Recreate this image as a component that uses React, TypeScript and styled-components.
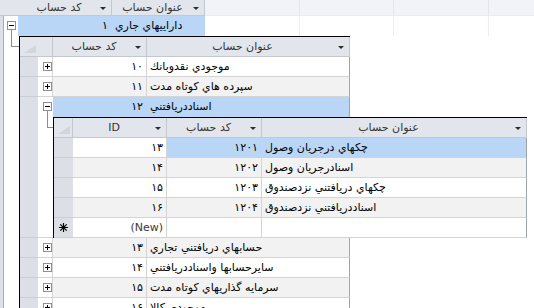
import React from 'react';
import styled, { createGlobalStyle } from 'styled-components';

const GlobalStyle = createGlobalStyle`
  html, body { margin: 0; padding: 0; background: #fff; }
  body {
    width: 534px; height: 308px; overflow: hidden;
    font-family: "DejaVu Sans", "Noto Sans", sans-serif;
    font-size: 11px; color: #000;
  }
`;

type Tone = 'plain' | 'alt' | 'sel';

const toneBg = (t?: Tone) => (t === 'sel' ? '#b9d6f6' : t === 'alt' ? '#f2f2f2' : '#ffffff');

const Page = styled.div`
  width: 534px;
  height: 308px;
  overflow: hidden;
`;

const Sheet = styled.div<{ $framed?: boolean }>`
  display: flex;
  flex-direction: column;
  align-items: flex-start;
  border-left: ${p => (p.$framed ? '1px solid #000' : 'none')};
`;

const HeadRow = styled.div<{ $h: number; $framed?: boolean }>`
  display: flex;
  flex: none;
  height: ${p => p.$h}px;
  border-top: ${p => (p.$framed ? '1px solid #000' : 'none')};
`;

const Corner = styled.div<{ $w: number; $divider?: boolean }>`
  box-sizing: border-box;
  width: ${p => p.$w}px;
  height: 100%;
  background: #e2e6ec;
  border-right: ${p => (p.$divider ? '1px solid #c3c7ce' : 'none')};
  border-bottom: 1px solid #c3c7ce;
  display: flex;
  align-items: flex-end;
  padding: 0 0 3px 4px;
`;

const HeadCell = styled.div<{ $w: number }>`
  box-sizing: border-box;
  width: ${p => p.$w}px;
  height: 100%;
  background: #e2e6ec;
  border-right: 1px solid #c3c7ce;
  border-bottom: 1px solid #c3c7ce;
  display: flex;
  align-items: center;
  color: #333;
  white-space: nowrap;
  overflow: hidden;
`;

const HeadLabel = styled.span`
  flex: 1;
  text-align: center;
  padding-left: 4px;
`;

const DropArrow = styled.span`
  flex: none;
  width: 0;
  height: 0;
  margin: 1px 5px 0 4px;
  border-left: 3px solid transparent;
  border-right: 3px solid transparent;
  border-top: 3px solid #2b2b2b;
`;

const GhostHead = styled.div<{ $w: number }>`
  box-sizing: border-box;
  width: ${p => p.$w}px;
  height: 100%;
  background: #f1f3f8;
  border-right: 1px solid #e2e5eb;
  border-bottom: 1px solid #e8ebf0;
`;

const GhostCell = styled.div<{ $w: number }>`
  box-sizing: border-box;
  width: ${p => p.$w}px;
  height: 100%;
  background: #fff;
  border-right: 1px solid #eceef3;
`;

const Row = styled.div`
  display: flex;
  flex: none;
  height: 20px;
`;

const ChildRow = styled.div`
  display: flex;
  flex: none;
  align-items: stretch;
`;

const Selector = styled.div<{ $w: number; $edge?: boolean; $open?: boolean }>`
  box-sizing: border-box;
  width: ${p => p.$w}px;
  flex: none;
  background: #dcdfe5;
  border-right: ${p => (p.$edge ? '1px solid #a9aeb6' : 'none')};
  border-bottom: ${p => (p.$open || p.$edge ? 'none' : '1px solid #c9cdd4')};
  display: flex;
  align-items: center;
  justify-content: center;
`;

const Expander = styled.div<{ $w: number; $pad: number; $open?: boolean }>`
  box-sizing: border-box;
  width: ${p => p.$w}px;
  height: 100%;
  flex: none;
  background: #fff;
  border-right: ${p => (p.$open ? 'none' : '1px solid #d4d4d4')};
  border-bottom: ${p => (p.$open ? 'none' : '1px solid #d4d4d4')};
  display: flex;
  flex-direction: column;
  align-items: flex-start;
  padding: 5px 0 0 ${p => p.$pad}px;
`;

const TreeLine = styled.div`
  flex: 1;
  margin-left: 4px;
  border-left: 1px solid #8c8c8c;
`;

const Gutter = styled.div<{ $w: number }>`
  box-sizing: border-box;
  width: ${p => p.$w}px;
  flex: none;
  background: #fff;
  border-bottom: 1px solid #d4d4d4;
`;

const Connector = styled.div<{ $offset: number }>`
  box-sizing: border-box;
  height: 11px;
  margin-left: ${p => p.$offset}px;
  border-left: 1px solid #8c8c8c;
  border-bottom: 1px solid #8c8c8c;
`;

const Cell = styled.div<{ $w: number; $tone?: Tone; $align?: 'left' | 'right'; $edge?: boolean; $muted?: boolean }>`
  box-sizing: border-box;
  width: ${p => p.$w}px;
  height: 100%;
  flex: none;
  background: ${p => toneBg(p.$tone)};
  border-right: 1px solid ${p => (p.$edge ? '#9ea4ac' : p.$tone === 'sel' ? '#b9d6f6' : '#d4d4d4')};
  border-bottom: 1px solid ${p => (p.$tone === 'sel' ? '#b9d6f6' : '#d4d4d4')};
  padding: 0 3px;
  text-align: ${p => p.$align ?? 'left'};
  line-height: 19px;
  white-space: nowrap;
  overflow: hidden;
  color: ${p => (p.$muted ? '#3a3a3a' : '#000')};
`;

const ToggleIcon = ({ open }: { open?: boolean }) => (
  <svg width="9" height="9" viewBox="0 0 9 9" style={{ flex: 'none', display: 'block' }}>
    <rect x="0.5" y="0.5" width="8" height="8" fill="#fff" stroke="#8f8f8f" />
    <path d="M2 4.5h5" stroke="#000" />
    {!open && <path d="M4.5 2v5" stroke="#000" />}
  </svg>
);

const SelectAll = () => (
  <svg width="12" height="8" viewBox="0 0 12 8" style={{ display: 'block' }}>
    <polygon points="12,0 12,8 0,8" fill="#d2d6dc" />
  </svg>
);

const NewMark = () => (
  <svg width="9" height="9" viewBox="0 0 9 9" style={{ display: 'block' }}>
    <g stroke="#000" strokeWidth="1.2">
      <path d="M4.5 0v9M0 4.5h9M1.3 1.3l6.4 6.4M7.7 1.3l-6.4 6.4" />
    </g>
  </svg>
);

const ghosts = [95, 94, 95, 60];

const l1Rows = [
  { code: '۱۰', title: 'موجودي نقدوبانك' },
  { code: '۱۱', title: 'سپرده هاي كوتاه مدت' },
  { code: '۱۲', title: 'اسناددريافتني', open: true },
  { code: '۱۳', title: 'حسابهاي دريافتني تجاري' },
  { code: '۱۴', title: 'سايرحسابها واسناددريافتني' },
  { code: '۱۵', title: 'سرمايه گذاريهاي كوتاه مدت' },
  { code: '۱۶', title: 'موجودي كالا' },
];

const l2Rows = [
  { id: '۱۳', code: '۱۲۰۱', title: 'چكهاي درجريان وصول' },
  { id: '۱۴', code: '۱۲۰۲', title: 'اسنادرجريان وصول' },
  { id: '۱۵', code: '۱۲۰۳', title: 'چكهاي دريافتني نزدصندوق' },
  { id: '۱۶', code: '۱۲۰۴', title: 'اسناددريافتني نزدصندوق' },
];

const Head = ({ w, label }: { w: number; label: string }) => (
  <HeadCell $w={w}>
    <HeadLabel>{label}</HeadLabel>
    <DropArrow />
  </HeadCell>
);

const SubSheet = () => (
  <Sheet $framed>
    <HeadRow $h={20} $framed>
      <Corner $w={19} $divider>
        <SelectAll />
      </Corner>
      <Head w={94} label="ID" />
      <Head w={95} label="کد حساب" />
      <Head w={265} label="عنوان حساب" />
    </HeadRow>
    {l2Rows.map((r, i) => {
      const tone: Tone = i === 0 ? 'sel' : i % 2 === 1 ? 'alt' : 'plain';
      return (
        <Row key={r.id}>
          <Selector $w={19} />
          <Cell $w={94} $tone={i === 0 ? 'plain' : tone} $align="right">{r.id}</Cell>
          <Cell $w={95} $tone={tone} $align="right">{r.code}</Cell>
          <Cell $w={265} $tone={tone} $edge>{r.title}</Cell>
        </Row>
      );
    })}
    <Row>
      <Selector $w={19}>
        <NewMark />
      </Selector>
      <Cell $w={94} $align="right" $muted>(New)</Cell>
      <Cell $w={95} />
      <Cell $w={265} $edge />
    </Row>
  </Sheet>
);

const MidSheet = () => (
  <Sheet $framed>
    <HeadRow $h={20} $framed>
      <Corner $w={33} $divider>
        <SelectAll />
      </Corner>
      <Head w={94} label="کد حساب" />
      <Head w={203} label="عنوان حساب" />
    </HeadRow>
    {l1Rows.map((r, i) => {
      const tone: Tone = r.open ? 'sel' : i % 2 === 1 ? 'alt' : 'plain';
      return (
        <React.Fragment key={r.code}>
          <Row>
            <Selector $w={18} $open={r.open} />
            <Expander $w={15} $pad={5} $open={r.open}>
              <ToggleIcon open={r.open} />
              {r.open && <TreeLine />}
            </Expander>
            <Cell $w={94} $tone={tone} $align="right">{r.code}</Cell>
            <Cell $w={203} $tone={tone} $edge>{r.title}</Cell>
          </Row>
          {r.open && (
            <ChildRow>
              <Selector $w={18} />
              <Gutter $w={15}>
                <Connector $offset={9} />
              </Gutter>
              <SubSheet />
            </ChildRow>
          )}
        </React.Fragment>
      );
    })}
  </Sheet>
);

export default function App() {
  return (
    <>
      <GlobalStyle />
      <Page>
        <Sheet>
          <HeadRow $h={16}>
            <Corner $w={18} />
            <Head w={94} label="کد حساب" />
            <Head w={93} label="عنوان حساب" />
            {ghosts.map((w, i) => (
              <GhostHead key={i} $w={w} />
            ))}
          </HeadRow>
          <Row>
            <Selector $w={4} $edge />
            <Expander $w={14} $pad={3} $open>
              <ToggleIcon open />
              <TreeLine />
            </Expander>
            <Cell $w={94} $tone="sel" $align="right">۱</Cell>
            <Cell $w={93} $tone="sel">داراييهاي جاري</Cell>
            {ghosts.map((w, i) => (
              <GhostCell key={i} $w={w} />
            ))}
          </Row>
          <ChildRow>
            <Selector $w={4} $edge />
            <Gutter $w={15} style={{ borderBottom: 'none' }}>
              <Connector $offset={7} />
            </Gutter>
            <MidSheet />
          </ChildRow>
        </Sheet>
      </Page>
    </>
  );
}
